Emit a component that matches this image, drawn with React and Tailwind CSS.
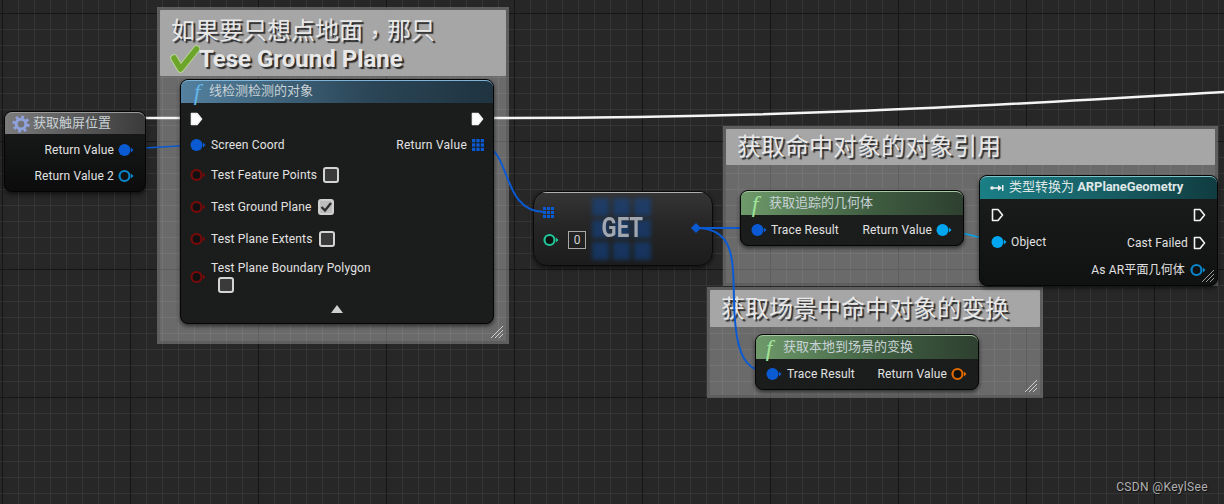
const CJK = "font-['Roboto','Noto_Sans_CJK_SC',sans-serif]";

function Pin({ color, hollow = false }) {
  return (
    <svg width="16" height="14" viewBox="0 0 16 14" className="shrink-0">
      {hollow ? (
        <circle cx="6.5" cy="7" r="5" fill="#111" stroke={color} strokeWidth="2.2" />
      ) : (
        <circle cx="6.5" cy="7" r="6" fill={color} />
      )}
      <path d="M13 4.5 L15.5 7 L13 9.5 Z" fill={color} />
    </svg>
  );
}

function Exec({ solid = false }) {
  return (
    <svg width="13" height="14" viewBox="0 0 13 14" className="shrink-0">
      <path
        d="M1.5 1.5 H7 L11.5 7 L7 12.5 H1.5 Z"
        fill={solid ? "#fff" : "none"}
        stroke="#f2f2f2"
        strokeWidth="1.6"
        strokeLinejoin="round"
      />
    </svg>
  );
}

function ArrayIcon({ size = 12 }) {
  return (
    <svg width={size} height={size} viewBox="0 0 11 11" className="shrink-0">
      {[0, 4, 8].map((y) =>
        [0, 4, 8].map((x) => <rect key={`${x}-${y}`} x={x} y={y} width="3" height="3" fill="#0a5ad4" />)
      )}
    </svg>
  );
}

function Check({ checked = false }) {
  return checked ? (
    <div className="flex h-4 w-4 shrink-0 items-center justify-center rounded-[3px] border-2 border-[#cfcfcf] bg-[#bdbdbd]">
      <svg width="12" height="12" viewBox="0 0 12 12">
        <path d="M1.5 6 L5 9.5 L11 2" fill="none" stroke="#2e2e2e" strokeWidth="2.4" />
      </svg>
    </div>
  ) : (
    <div className="h-4 w-4 shrink-0 rounded-[3px] border-2 border-[#d4d4d4] bg-[#3a3a3a]" />
  );
}

function Grip({ color = "#cfcfcf" }) {
  return (
    <svg width="14" height="14" viewBox="0 0 14 14" className="absolute right-[2px] bottom-[2px]">
      <path d="M1 13 L13 1 M5 13 L13 5 M9 13 L13 9" stroke={color} strokeWidth="1" fill="none" />
    </svg>
  );
}

function Comment({ className, headerClass, children }) {
  return (
    <div className={`absolute border-[3px] border-[#55555590] bg-[#ffffff50] ${className}`}>
      <div className={`rounded-[1px] bg-[#a6a6a6] pl-[11px] text-[24px] leading-[30px] text-[#e8e8e8] [text-shadow:2px_2px_1px_#2a2a2a] ${CJK} ${headerClass}`}>
        {children}
      </div>
      <Grip />
    </div>
  );
}

function FIcon({ color }) {
  return (
    <span className={`w-[14px] text-center font-['Liberation_Serif',serif] text-[24px] leading-[20px] italic ${color}`}>f</span>
  );
}

function Text({ children, className = "" }) {
  return (
    <span className={`text-[12px] leading-[14px] tracking-[0.15px] whitespace-nowrap text-[#e2e2e2] ${CJK} ${className}`}>
      {children}
    </span>
  );
}

function Title({ children }) {
  return <span className={`pb-[2px] text-[13px] whitespace-nowrap text-[#c9d2d6] ${CJK}`}>{children}</span>;
}

const node =
  "absolute rounded-[8px] border border-[#050505] bg-[#1b1d1c] shadow-[0_2px_4px_rgba(0,0,0,0.6)]";

export default function App() {
  return (
    <div className="relative h-[504px] w-[1224px] overflow-hidden bg-[#272727] [background-image:linear-gradient(to_right,#161616_1px,transparent_1px),linear-gradient(to_bottom,#161616_1px,transparent_1px),linear-gradient(to_right,#353535_1px,transparent_1px),linear-gradient(to_bottom,#353535_1px,transparent_1px)] [background-position:2px_13px] [background-size:128px_128px,128px_128px,16px_16px,16px_16px]">
      {/* Comments */}
      <Comment className="top-[7px] left-[157px] h-[337px] w-[352px]" headerClass="h-[66px] pt-[4px]">
        <div className="h-[30px]">
          如果要只想点地面<span className="inline-block translate-y-[4px] font-['Noto_Sans_CJK_TC',sans-serif]">，</span>那只
        </div>
        <div className="flex items-center font-bold">
          <svg width="30" height="30" viewBox="0 0 30 30" className="-ml-[1px] shrink-0">
            <path d="M4 14 L10.5 25 L26.5 5" fill="none" stroke="#b9d49a" strokeWidth="7.5" strokeLinejoin="round" strokeLinecap="round" />
            <path d="M4 14 L10.5 25 L26.5 5" fill="none" stroke="#6da52b" strokeWidth="5.5" strokeLinejoin="round" strokeLinecap="round" />
          </svg>
          <span className="-ml-[1px]">Tese Ground Plane</span>
        </div>
      </Comment>
      <Comment className="top-[126px] left-[723px] h-[160px] w-[495px]" headerClass="h-[36px] pt-[3px]">
        获取命中对象的对象引用
      </Comment>
      <Comment className="top-[287px] left-[707px] h-[111px] w-[336px]" headerClass="h-[37px] pt-[4px]">
        获取场景中命中对象的变换
      </Comment>

      {/* GET node */}
      <div className="absolute top-[191px] left-[533px] h-[75px] w-[180px] overflow-hidden rounded-[14px] border border-[#0a0a0a] bg-[linear-gradient(to_bottom,#353535,#262626_45%,#1c1c1c)] shadow-[0_2px_4px_rgba(0,0,0,0.6)]">
        <div className="absolute top-0 right-[6px] left-[6px] h-[1px] bg-[#b0b0b0]" />
        <div className="absolute top-[6px] left-[58px] grid grid-cols-3 gap-[4px] opacity-50 blur-[2px]">
          {Array.from({ length: 9 }).map((_, i) => (
            <div key={i} className="h-[18px] w-[17px] bg-[#0f4a9c]" />
          ))}
        </div>
        <div className="absolute top-[20px] left-[54px] flex w-[68px] justify-center">
          <span className="scale-x-[0.82] font-['Roboto',sans-serif] text-[27px] leading-[32px] font-bold text-[#a2a6ae]">GET</span>
        </div>
        <div className="relative flex h-full flex-col pt-[15px] pl-[9px]">
          <div className="flex h-[12px]">
            <ArrayIcon size={11} />
          </div>
          <div className="mt-[12px] flex items-center gap-[9px]">
            <Pin color="#1fc79a" hollow />
            <div className="flex h-[18px] w-[18px] items-center justify-center border border-[#a8a8a8] font-['Roboto',sans-serif] text-[12px] text-[#d0d0d0]">0</div>
          </div>
        </div>
        <svg width="10" height="10" viewBox="0 0 10 10" className="absolute top-[31px] left-[157px]">
          <path d="M5 0 L10 5 L5 10 L0 5 Z" fill="#0a5ad4" />
        </svg>
      </div>

      {/* Wires */}
      <svg width="1224" height="504" className="absolute top-0 left-0" fill="none">
        <path d="M140 118 H195" stroke="#f4f4f4" strokeWidth="2.5" />
        <path d="M478 118 C800 118 1000 105 1224 92" stroke="#f4f4f4" strokeWidth="2.5" />
        <path d="M128 149 L195 145" stroke="#0a5ad4" strokeWidth="1.6" />
        <path d="M480 145 C512 145 500 212 544 212" stroke="#0a5ad4" strokeWidth="2" />
        <path d="M696 228 H756" stroke="#0a5ad4" strokeWidth="2" />
        <path d="M696 228 C735 228 733 260 734 300 C735 355 745 373 772 373" stroke="#0a5ad4" strokeWidth="2" />
        <path d="M945 229 L995 241" stroke="#00a6f0" strokeWidth="1.6" />
      </svg>

      {/* Get touch position */}
      <div className={`${node} top-[111px] left-[4px] h-[81px] w-[142px] bg-[linear-gradient(to_bottom,#1a1c1c,#0c0c0c)]`}>
        <div className="flex h-[22px] items-center gap-[3px] rounded-t-[7px] border-t border-[#9a9a9a] bg-[linear-gradient(to_right,#7b7b7b,#3a3a3a)] pl-[7px]">
          <svg width="18" height="18" viewBox="0 0 24 24" className="shrink-0">
            <circle cx="12" cy="12" r="6.5" fill="none" stroke="#8fa2dc" strokeWidth="4" />
            <circle cx="12" cy="12" r="9.5" fill="none" stroke="#8fa2dc" strokeWidth="4" strokeDasharray="3.7 3.76" />
          </svg>
          <Title>获取触屏位置</Title>
        </div>
        <div className="flex h-[30px] items-center justify-end gap-[4px] pt-[2px] pr-[11px]">
          <Text>Return Value</Text>
          <Pin color="#0a5ad4" />
        </div>
        <div className="flex h-[24px] items-center justify-end gap-[4px] pr-[11px]">
          <Text>Return Value 2</Text>
          <Pin color="#0a86cc" hollow />
        </div>
      </div>

      {/* Line trace node */}
      <div className={`${node} top-[79px] left-[180px] h-[245px] w-[314px]`}>
        <div className="flex h-[23px] items-center gap-[5px] rounded-t-[7px] border-t border-[#7fb4d8] bg-[linear-gradient(to_right,#54819f,#2b4657_60%,#1f3340)] pl-[9px]">
          <FIcon color="text-[#63b6ea]" />
          <Title>线检测检测的对象</Title>
        </div>
        <div className="flex h-[28px] items-center justify-between px-[9px] pt-[3px]">
          <Exec solid />
          <Exec solid />
        </div>
        <div className="flex h-[28px] items-center justify-between pr-[9px] pl-[9px]">
          <div className="flex items-center gap-[5px]">
            <Pin color="#0a5ad4" />
            <Text>Screen Coord</Text>
          </div>
          <div className="flex items-center gap-[5px]">
            <Text className="tracking-[0.25px]">Return Value</Text>
            <ArrayIcon />
          </div>
        </div>
        {[
          ["Test Feature Points", false],
          ["Test Ground Plane", true],
          ["Test Plane Extents", false],
        ].map(([label, checked]) => (
          <div key={label} className="flex h-[32px] items-center gap-[5px] pl-[9px]">
            <Pin color="#7a0a0a" hollow />
            <Text>{label}</Text>
            <div className="ml-[1px]">
              <Check checked={checked} />
            </div>
          </div>
        ))}
        <div className="flex h-[44px] items-center gap-[5px] pl-[9px]">
          <Pin color="#7a0a0a" hollow />
          <div className="flex flex-col items-start gap-[2px]">
            <Text>Test Plane Boundary Polygon</Text>
            <div className="ml-[7px]">
              <Check />
            </div>
          </div>
        </div>
        <div className="flex justify-center pt-[6px]">
          <svg width="12" height="8" viewBox="0 0 12 8">
            <path d="M6 0 L12 8 H0 Z" fill="#cfcfcf" />
          </svg>
        </div>
      </div>

      {/* Get tracked geometry */}
      <div className={`${node} top-[190px] left-[740px] h-[56px] w-[224px]`}>
        <div className="flex h-[24px] items-center gap-[7px] rounded-t-[7px] border-t border-[#a5c9a0] bg-[linear-gradient(to_right,#6e9a6a,#3e5c40_60%,#2e4030)] pl-[7px]">
          <FIcon color="text-[#9fe39a]" />
          <Title>获取追踪的几何体</Title>
        </div>
        <div className="flex h-[30px] items-center justify-between pr-[11px] pl-[10px]">
          <div className="flex items-center gap-[4px]">
            <Pin color="#0a5ad4" />
            <Text>Trace Result</Text>
          </div>
          <div className="flex items-center gap-[4px]">
            <Text>Return Value</Text>
            <Pin color="#00a6f0" />
          </div>
        </div>
      </div>

      {/* Cast node */}
      <div className={`${node} top-[175px] left-[979px] h-[111px] w-[239px] bg-[linear-gradient(to_bottom,#1c1e1d,#101211)]`}>
        <div className="flex h-[23px] items-center gap-[5px] rounded-t-[7px] border-t border-[#7fc4c8] bg-[linear-gradient(to_right,#1b7f86,#175a60_60%,#103c40)] pl-[10px]">
          <svg width="14" height="10" viewBox="0 0 14 10" className="shrink-0">
            <path d="M1 5 H11" stroke="#eee" strokeWidth="1.5" />
            <circle cx="2" cy="5" r="1.8" fill="#eee" />
            <path d="M8 2 L12 5 L8 8 Z" fill="#eee" />
            <rect x="12" y="2" width="1.5" height="6" fill="#eee" />
          </svg>
          <span className={`pb-[2px] text-[13px] whitespace-nowrap text-[#dfe6e6] ${CJK}`}>
            类型转换为 <b className="tracking-[-0.1px]">ARPlaneGeometry</b>
          </span>
        </div>
        <div className="flex h-[30px] items-center justify-between pt-[1px] pr-[11px] pl-[11px]">
          <Exec />
          <Exec />
        </div>
        <div className="flex h-[26px] items-center justify-between pr-[11px] pl-[11px]">
          <div className="flex items-center gap-[4px]">
            <Pin color="#00a6f0" />
            <Text>Object</Text>
          </div>
          <div className="flex items-center gap-[5px] pt-[1px]">
            <Text>Cast Failed</Text>
            <Exec />
          </div>
        </div>
        <div className="flex h-[30px] items-center justify-end gap-[5px] pr-[11px]">
          <Text>As AR平面几何体</Text>
          <Pin color="#0a86cc" hollow />
        </div>
        <Grip color="#9a9a9a" />
      </div>

      {/* Local to scene */}
      <div className={`${node} top-[334px] left-[755px] h-[56px] w-[224px]`}>
        <div className="flex h-[24px] items-center gap-[7px] rounded-t-[7px] border-t border-[#a5c9a0] bg-[linear-gradient(to_right,#6e9a6a,#3e5c40_60%,#2e4030)] pl-[6px]">
          <FIcon color="text-[#9fe39a]" />
          <Title>获取本地到场景的变换</Title>
        </div>
        <div className="flex h-[30px] items-center justify-between pr-[11px] pl-[10px]">
          <div className="flex items-center gap-[5px]">
            <Pin color="#0a5ad4" />
            <Text>Trace Result</Text>
          </div>
          <div className="flex items-center gap-[4px]">
            <Text>Return Value</Text>
            <Pin color="#e06a00" hollow />
          </div>
        </div>
      </div>

      {/* Watermark */}
      <div className="absolute top-[479px] right-[16px] font-['Roboto',sans-serif] text-[12px] leading-[16px] tracking-[0.35px] text-[#b0b0b0] [text-shadow:1px_1px_1px_#111]">
        CSDN @KeylSee
      </div>
    </div>
  );
}
